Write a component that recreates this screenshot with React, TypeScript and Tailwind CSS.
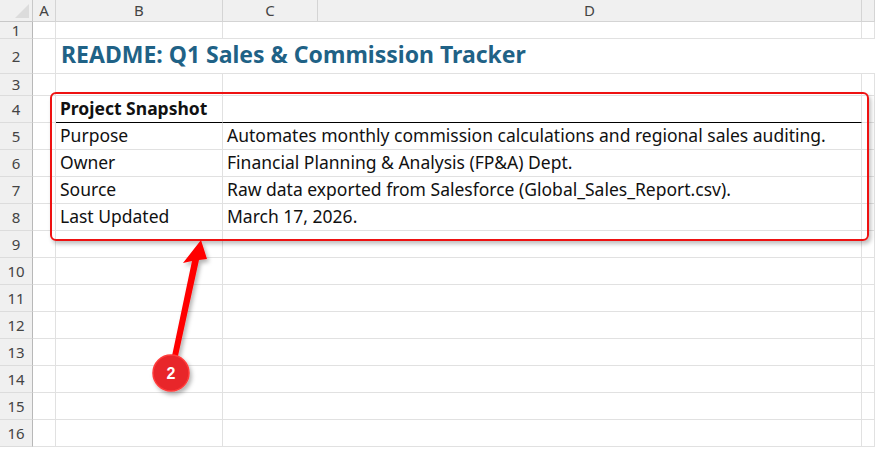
import React from "react";

const cols = ["A", "B", "C", "D", ""];
const colW = "33px 23px 167px 95px 544px 1fr";
const rowH = [17, 35, 22, 27, 27, 27, 27, 27, 27, 27, 27, 27, 27, 27, 27, 27];

const data: Record<number, [string, string, boolean?]> = {
  4: ["Project Snapshot", "", true],
  5: ["Purpose", "Automates monthly commission calculations and regional sales auditing."],
  6: ["Owner", "Financial Planning & Analysis (FP&A) Dept."],
  7: ["Source", "Raw data exported from Salesforce (Global_Sales_Report.csv)."],
  8: ["Last Updated", "March 17, 2026."],
};

export default function App() {
  return (
    <div className="relative w-[875px] h-[450px] overflow-hidden bg-white text-[#111]" style={{ fontFamily: '"Noto Sans", "Open Sans", sans-serif' }}>
      <div className="grid" style={{ gridTemplateColumns: colW, gridTemplateRows: `22px ${rowH.map((h) => h + "px").join(" ")}` }}>
        <div className="bg-[#f0f0f0] border-b border-r border-[#c8c8c8] relative">
          <div className="absolute right-[3px] bottom-[3px] w-0 h-0 border-l-[14px] border-l-transparent border-b-[14px] border-b-[#dcdcdc]" />
        </div>
        {cols.map((c, i) => (
          <div key={i} className="bg-[#f0f0f0] border-b border-r border-[#d4d4d4] flex items-center justify-center text-[15px] text-[#444]">{c}</div>
        ))}
        {rowH.map((_, r) => {
          const n = r + 1;
          const d = data[n];
          const bottom = n === 4 ? "border-b border-b-black" : "border-b border-b-[#e1e1e1]";
          return (
            <React.Fragment key={n}>
              <div className="bg-[#f0f0f0] border-r border-[#b8b8b8] border-b border-b-[#dcdcdc] flex items-center justify-center text-[15px] text-[#444]">{n}</div>
              <div className="border-r border-[#e1e1e1] border-b border-b-[#e1e1e1]" />
              {n === 2 ? (
                <div className="col-span-4 flex items-end pb-[2px] pl-[5px] text-[23px] font-bold text-[#1f6286] whitespace-nowrap border-b border-b-[#e1e1e1]">
                  README: Q1 Sales &amp; Commission Tracker
                </div>
              ) : (
                <>
                  <div className={`border-r border-[#e1e1e1] ${bottom} flex items-end pb-[1px] pl-[4px] text-[17.5px] whitespace-nowrap ${d?.[2] ? "font-bold" : ""}`}>{d?.[0]}</div>
                  <div className={`col-span-2 border-r border-[#e1e1e1] ${bottom} flex items-end pb-[1px] pl-[4px] text-[17.5px] whitespace-nowrap`}>{d?.[1]}</div>
                  <div className="border-r border-[#e1e1e1] border-b border-b-[#e1e1e1]" />
                </>
              )}
            </React.Fragment>
          );
        })}
      </div>
      <div className="absolute left-[50px] top-[92px] w-[819px] h-[149px] border-2 border-[#ee1111] rounded-[6px] shadow-[2px_3px_4px_rgba(0,0,0,0.25)]" />
      <svg className="absolute left-0 top-0" width="875" height="450">
        <defs>
          <filter id="sh" x="-50%" y="-50%" width="200%" height="200%">
            <feDropShadow dx="2" dy="3" stdDeviation="2" floodOpacity="0.3" />
          </filter>
        </defs>
        <g filter="url(#sh)">
          <polygon points="201,240 183,263 192,261 172,356 178,356 199,260 207,259" fill="#ff0000" />
          <circle cx="171" cy="373" r="18" fill="#e8282a" stroke="#ff3b3b" strokeWidth="1.5" />
        </g>
        <text x="171" y="379" textAnchor="middle" fill="#fff" fontSize="16" fontWeight="bold" fontFamily="Liberation Sans, sans-serif">2</text>
      </svg>
    </div>
  );
}
